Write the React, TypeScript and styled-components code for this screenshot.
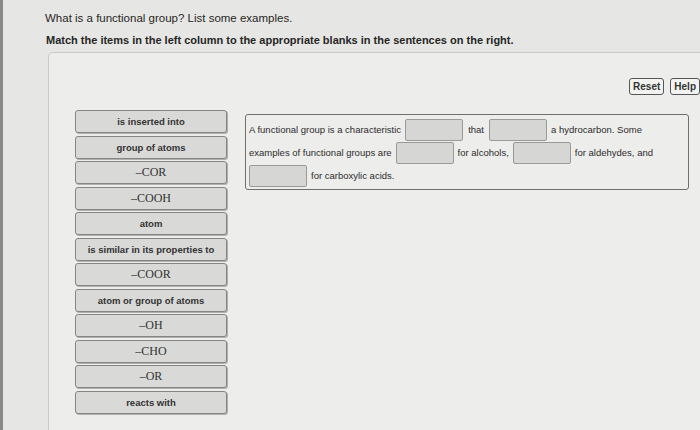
import React from "react";
import styled, { createGlobalStyle } from "styled-components";

const GlobalStyle = createGlobalStyle`
  body {
    margin: 0;
    background: #e6e6e4;
    font-family: "Liberation Sans", Arial, sans-serif;
    color: #2a2a2a;
    overflow: hidden;
  }
`;

const Page = styled.div`
  width: 700px;
  height: 430px;
  overflow: hidden;
  padding: 11px 0 0 42px;
  box-sizing: border-box;
  border-left: 3px solid #8a8a88;
`;

const Question = styled.div`
  font-size: 11.5px;
  line-height: 14px;
  color: #262626;
`;

const Instruction = styled.div`
  margin-top: 8px;
  margin-left: 1px;
  font-size: 11px;
  font-weight: bold;
  line-height: 14px;
  color: #262626;
`;

const Panel = styled.div`
  margin-top: 5px;
  margin-left: 3px;
  width: 680px;
  height: 400px;
  background: #ededeb;
  border: 1px solid #c9c9c7;
  border-radius: 5px;
  box-sizing: border-box;
`;

const Toolbar = styled.div`
  display: flex;
  justify-content: flex-end;
  gap: 6px;
  padding: 25px 27px 0 0;
`;

const ToolButton = styled.button`
  height: 17px;
  padding: 0 3px;
  border: 1px solid #555;
  border-radius: 3px;
  background: #f3f3f1;
  font-family: "Liberation Sans", Arial, sans-serif;
  font-size: 10px;
  font-weight: bold;
  color: #333;
`;

const Body = styled.div`
  display: flex;
  align-items: flex-start;
  gap: 18px;
  padding: 15px 0 0 26px;
`;

const Choices = styled.div`
  display: flex;
  flex-direction: column;
  gap: 2.5px;
  width: 152px;
`;

const Choice = styled.div<{ $formula?: boolean }>`
  height: 23px;
  display: flex;
  align-items: center;
  justify-content: center;
  background: #d9d9d7;
  border: 1px solid #858583;
  border-radius: 3px;
  box-shadow: 1px 1px 0 #b0b0ae;
  box-sizing: border-box;
  color: #333;
  font-family: ${(p) =>
    p.$formula
      ? '"Liberation Serif", "Times New Roman", serif'
      : '"Liberation Sans", Arial, sans-serif'};
  font-size: ${(p) => (p.$formula ? "12px" : "9.5px")};
  font-weight: ${(p) => (p.$formula ? "normal" : "bold")};
`;

const Sentences = styled.div`
  margin-top: 4px;
  width: 444px;
  padding: 3px 3px 2px 3px;
  border: 1px solid #6f6f6d;
  border-radius: 3px;
  box-sizing: border-box;
  display: flex;
  flex-direction: column;
`;

const Line = styled.div`
  display: flex;
  align-items: center;
  height: 23px;
  gap: 4px;
  font-size: 9.5px;
  color: #2c2c2c;
  white-space: nowrap;
`;

const Blank = styled.div`
  width: 58px;
  height: 22px;
  background: #d6d6d4;
  border: 1px solid #9a9a98;
  border-radius: 2px;
  box-sizing: border-box;
`;

const Word = styled.span<{ $w?: number }>`
  display: inline-block;
  text-align: center;
  min-width: ${(p) => (p.$w ? `${p.$w}px` : "auto")};
`;

const choices: { text: string; formula?: boolean }[] = [
  { text: "is inserted into" },
  { text: "group of atoms" },
  { text: "–COR", formula: true },
  { text: "–COOH", formula: true },
  { text: "atom" },
  { text: "is similar in its properties to" },
  { text: "–COOR", formula: true },
  { text: "atom or group of atoms" },
  { text: "–OH", formula: true },
  { text: "–CHO", formula: true },
  { text: "–OR", formula: true },
  { text: "reacts with" },
];

export default function App() {
  return (
    <>
      <GlobalStyle />
      <Page>
        <Question>What is a functional group? List some examples.</Question>
        <Instruction>
          Match the items in the left column to the appropriate blanks in the sentences on the right.
        </Instruction>
        <Panel>
          <Toolbar>
            <ToolButton>Reset</ToolButton>
            <ToolButton>Help</ToolButton>
          </Toolbar>
          <Body>
            <Choices>
              {choices.map((c) => (
                <Choice key={c.text} $formula={c.formula}>
                  {c.text}
                </Choice>
              ))}
            </Choices>
            <Sentences>
              <Line>
                <Word>A functional group is a characteristic</Word>
                <Blank />
                <Word $w={18}>that</Word>
                <Blank />
                <Word>a hydrocarbon. Some</Word>
              </Line>
              <Line>
                <Word>examples of functional groups are</Word>
                <Blank />
                <Word>for alcohols,</Word>
                <Blank />
                <Word>for aldehydes, and</Word>
              </Line>
              <Line>
                <Blank />
                <Word>for carboxylic acids.</Word>
              </Line>
            </Sentences>
          </Body>
        </Panel>
      </Page>
    </>
  );
}
